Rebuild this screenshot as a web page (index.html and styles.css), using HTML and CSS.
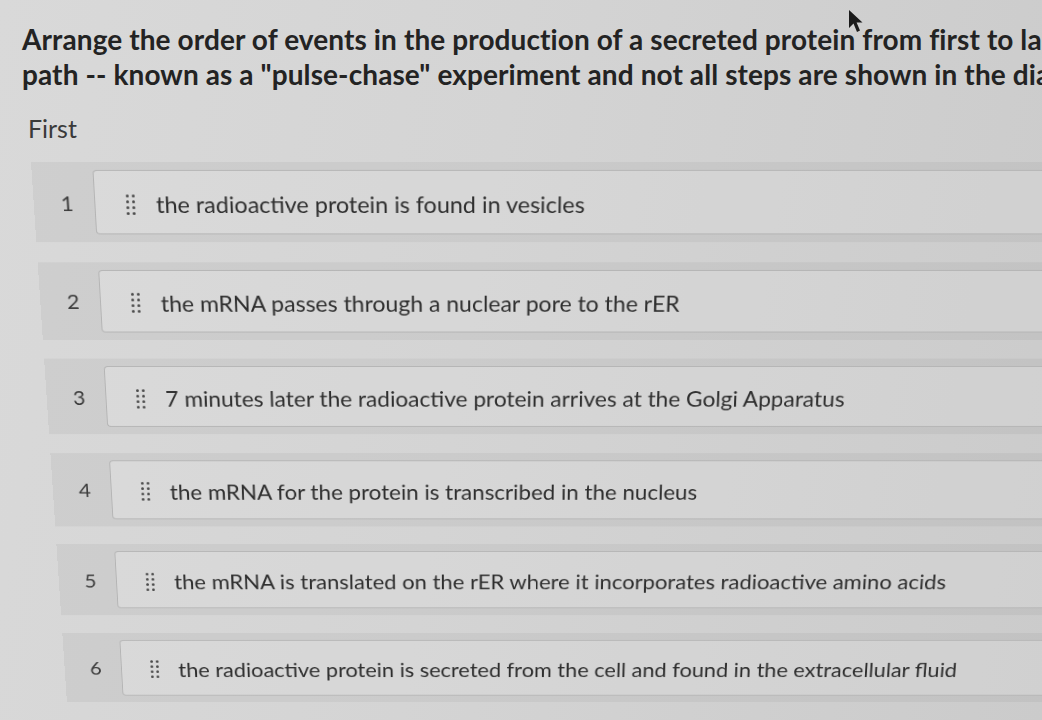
FILE: index.html
```html
<!DOCTYPE html>
<html lang="en">
<head>
<meta charset="utf-8">
<title>Ordering question</title>
<link rel="stylesheet" href="styles.css">
</head>
<body>
<main class="page">
  <h1 class="prompt"><span class="line">Arrange the order of events in the production of a secreted protein from first to last along the secretory</span><span class="line">path -- known as a "pulse-chase" experiment and not all steps are shown in the diagram.</span></h1>
  <p class="label">First</p>
  <ol class="list">
    <li class="row"><span class="num">1</span><div class="card"><span class="handle"><i></i><i></i><i></i><i></i><i></i><i></i><i></i><i></i></span><span class="text">the radioactive protein is found in vesicles</span></div></li>
    <li class="row"><span class="num">2</span><div class="card"><span class="handle"><i></i><i></i><i></i><i></i><i></i><i></i><i></i><i></i></span><span class="text">the mRNA passes through a nuclear pore to the rER</span></div></li>
    <li class="row"><span class="num">3</span><div class="card"><span class="handle"><i></i><i></i><i></i><i></i><i></i><i></i><i></i><i></i></span><span class="text">7 minutes later the radioactive protein arrives at the Golgi Apparatus</span></div></li>
    <li class="row"><span class="num">4</span><div class="card"><span class="handle"><i></i><i></i><i></i><i></i><i></i><i></i><i></i><i></i></span><span class="text">the mRNA for the protein is transcribed in the nucleus</span></div></li>
    <li class="row"><span class="num">5</span><div class="card"><span class="handle"><i></i><i></i><i></i><i></i><i></i><i></i><i></i><i></i></span><span class="text">the mRNA is translated on the rER where it incorporates radioactive amino acids</span></div></li>
    <li class="row"><span class="num">6</span><div class="card"><span class="handle"><i></i><i></i><i></i><i></i><i></i><i></i><i></i><i></i></span><span class="text">the radioactive protein is secreted from the cell and found in the extracellular fluid</span></div></li>
  </ol>
  <svg class="cursor" width="16" height="26" viewBox="0 0 16 26" aria-hidden="true">
    <path d="M1 1 L1 19 L5.5 14.5 L9 23 L12 21.6 L8.6 13.4 L14.5 13.4 Z" fill="#1a1a1a"/>
  </svg>
</main>
</body>
</html>
```

FILE: styles.css
```css
html, body {
  margin: 0;
  height: 100%;
  overflow: hidden;
}

body {
  background: linear-gradient(100deg, #d9d9d9 0%, #d4d4d4 45%, #cbcbcb 100%);
  font-family: "Lato", "Open Sans", "Liberation Sans", sans-serif;
  color: #2a2a2a;
}

.page {
  position: relative;
  padding: 22px 0 0 22px;
  width: 1400px;
}

.prompt {
  margin: 0;
  font-size: 28px;
  font-weight: 700;
  line-height: 35px;
  color: #232323;
  letter-spacing: 0.1px;
}

.prompt .line {
  display: block;
  white-space: nowrap;
}

.label {
  margin: 20px 0 0 6px;
  font-size: 25px;
  line-height: 32px;
  color: #3a3a3a;
}

.list {
  list-style: none;
  margin: 18px 0 0 9px;
  padding: 0;
  display: flex;
  flex-direction: column;
  gap: 20.5px;
  transform: perspective(1000px) rotateX(-8.6deg);
  transform-origin: 440px 0;
}

.row {
  display: flex;
  align-items: center;
  padding: 8px 0;
  background: rgba(0, 0, 0, 0.045);
}

.num {
  width: 40px;
  padding-right: 21px;
  text-align: right;
  font-size: 22px;
  color: #3c3c3c;
}

.card {
  flex: 1;
  display: flex;
  align-items: center;
  height: 66px;
  box-sizing: border-box;
  padding: 4px 0 0 31px;
  gap: 21px;
  background: rgba(255, 255, 255, 0.22);
  border: 1px solid #b4b4b4;
  border-right: none;
  border-radius: 4px 0 0 4px;
}

.handle {
  display: grid;
  grid-template-columns: repeat(2, 3px);
  grid-auto-rows: 3px;
  column-gap: 3px;
  row-gap: 3px;
}

.handle i {
  display: block;
  width: 3px;
  height: 3px;
  border-radius: 50%;
  background: #4a4a4a;
}

.text {
  font-size: 23.5px;
  color: #2e2e2e;
  white-space: nowrap;
}

.cursor {
  position: absolute;
  left: 848px;
  top: 9px;
}
```
